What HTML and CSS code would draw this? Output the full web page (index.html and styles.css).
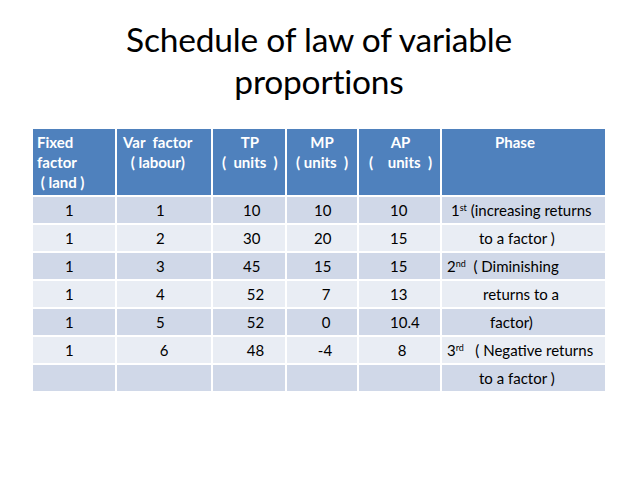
FILE: index.html
```html
<!DOCTYPE html>
<html>
<head>
<meta charset="utf-8">
<link rel="stylesheet" href="styles.css">
</head>
<body>
<div class="slide">
  <h1 class="title">Schedule of law of variable<br>proportions</h1>
  <table class="sched">
    <colgroup>
      <col class="c1"><col class="c2"><col class="c3"><col class="c4"><col class="c5"><col class="c6">
    </colgroup>
    <thead>
      <tr>
        <th class="h1"><span class="hb hl">Fixed
factor
 ( land )</span></th>
        <th class="h2"><span class="hb">Var  factor
( labour)</span></th>
        <th class="h3"><span class="hb">TP
(  units  )</span></th>
        <th class="h4"><span class="hb">MP
( units  )</span></th>
        <th class="h5"><span class="hb">AP
(    units  )</span></th>
        <th class="h6"><span class="hb">Phase</span></th>
      </tr>
    </thead>
    <tbody>
      <tr><td>1</td><td>1</td><td>10</td><td>10</td><td>10</td><td class="ph-a">1<sup>st</sup> (increasing returns</td></tr>
      <tr><td>1</td><td>2</td><td>30</td><td>20</td><td>15</td><td class="ph-b">to a factor )</td></tr>
      <tr><td>1</td><td>3</td><td>45</td><td>15</td><td>15</td><td class="ph-c">2<sup>nd</sup>  ( Diminishing</td></tr>
      <tr><td>1</td><td>4</td><td> 52</td><td>  7</td><td>13</td><td class="ph-d">returns to a</td></tr>
      <tr><td>1</td><td>5</td><td> 52</td><td>  0</td><td>10.4</td><td class="ph-e">factor)</td></tr>
      <tr><td>1</td><td> 6</td><td> 48</td><td> -4</td><td>  8</td><td class="ph-c">3<sup>rd</sup>   ( Negative returns</td></tr>
      <tr><td></td><td></td><td></td><td></td><td></td><td class="ph-b">to a factor )</td></tr>
    </tbody>
  </table>
</div>
</body>
</html>
```

FILE: styles.css
```css
html, body {
  margin: 0;
  padding: 0;
  background: #ffffff;
}

.slide {
  width: 638px;
  height: 478px;
  padding-top: 18px;
  box-sizing: border-box;
  font-family: "Lato", "Liberation Sans", sans-serif;
  color: #000;
}

.title {
  margin: 0;
  text-align: center;
  font-weight: 400;
  font-size: 33.5px;
  line-height: 42px;
  letter-spacing: -0.2px;
}

.sched {
  margin: 25px auto 0 auto;
  width: 574px;
  border-collapse: collapse;
  table-layout: fixed;
  font-size: 15px;
}

.c1 { width: 84px; }
.c2 { width: 96px; }
.c3 { width: 74px; }
.c4 { width: 72px; }
.c5 { width: 83px; }
.c6 { width: 165px; }

.sched th,
.sched td {
  border: 2px solid #ffffff;
  white-space: pre;
  padding: 0;
}

.sched th {
  background: #4f81bd;
  color: #ffffff;
  font-weight: 700;
  height: 63px;
  vertical-align: top;
  text-align: left;
  padding-top: 3px;
  line-height: 20px;
}

.hb {
  display: inline-block;
  text-align: center;
}

.hb.hl { text-align: left; }

.sched th.h1 { padding-left: 4px; }
.sched th.h2 { padding-left: 6px; }
.sched th.h3 { padding-left: 9px; }
.sched th.h4 { padding-left: 9px; }
.sched th.h5 { padding-left: 10px; }
.sched th.h6 { padding-left: 53px; }

.sched td {
  height: 26px;
  line-height: 18px;
  vertical-align: middle;
  text-align: left;
}

.sched tbody tr:nth-child(odd) td { background: #d0d8e8; }
.sched tbody tr:nth-child(even) td { background: #e9edf4; }

.sched td:nth-child(1) { padding-left: 32px; }
.sched td:nth-child(2) { padding-left: 39px; }
.sched td:nth-child(3) { padding-left: 30px; }
.sched td:nth-child(4) { padding-left: 27px; }
.sched td:nth-child(5) { padding-left: 31px; }

.sched td.ph-a { padding-left: 9px; }
.sched td.ph-b { padding-left: 37px; }
.sched td.ph-c { padding-left: 5px; }
.sched td.ph-d { padding-left: 41px; }
.sched td.ph-e { padding-left: 48px; }

.sched sup {
  font-size: 9px;
  line-height: 0;
  vertical-align: 5px;
}
```
